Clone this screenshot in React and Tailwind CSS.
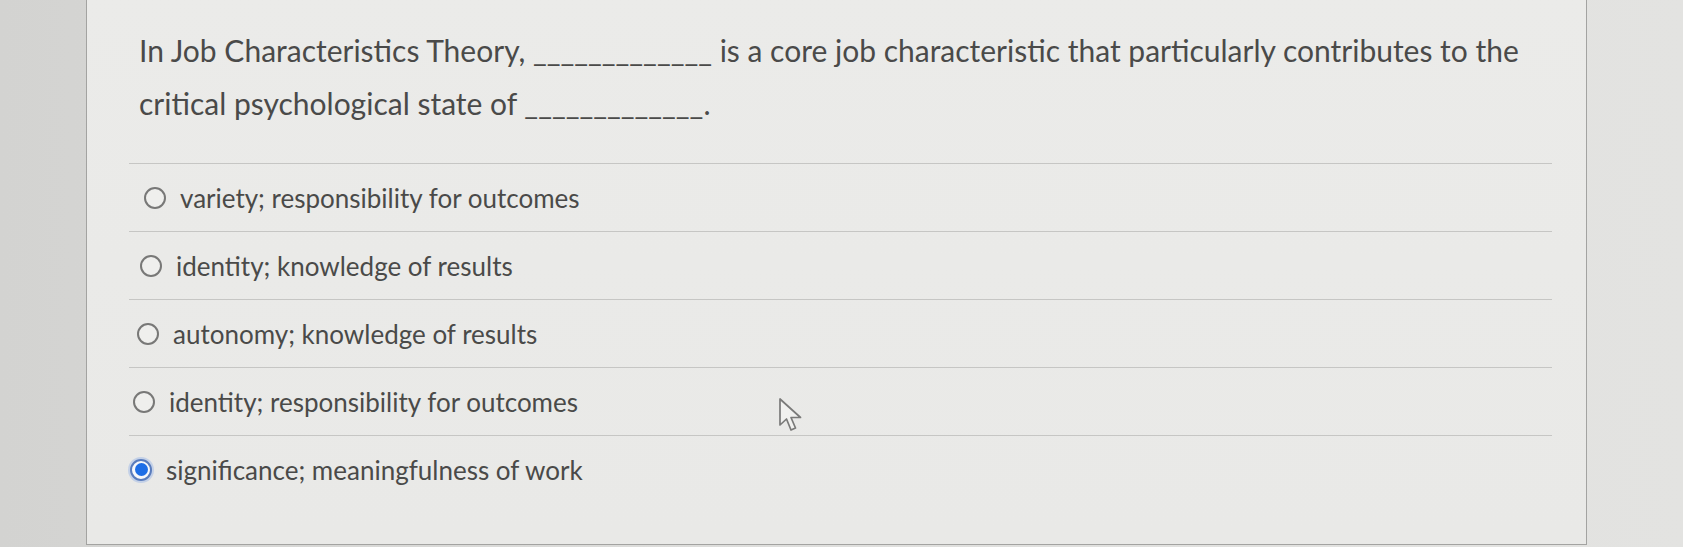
import React from "react";

const options = [
  { label: "variety; responsibility for outcomes", pad: "pl-[15px]", selected: false },
  { label: "identity; knowledge of results", pad: "pl-[11px]", selected: false },
  { label: "autonomy; knowledge of results", pad: "pl-[8px]", selected: false },
  { label: "identity; responsibility for outcomes", pad: "pl-[4px]", selected: false },
  { label: "significance; meaningfulness of work", pad: "pl-[1px]", selected: true },
];

function Radio({ selected }) {
  if (selected) {
    return (
      <span className="flex h-[22px] w-[22px] shrink-0 items-center justify-center rounded-full border-2 border-[#5a7cbc] bg-[#f7f8fb] shadow-[0_0_0_2px_rgba(150,180,230,0.45)]">
        <span className="h-[13px] w-[13px] rounded-full bg-[#1e6ee6]" />
      </span>
    );
  }
  return (
    <span className="h-[22px] w-[22px] shrink-0 rounded-full border-2 border-[#787877] bg-[#efefed]" />
  );
}

function Cursor() {
  return (
    <svg
      className="absolute left-[778px] top-[397px]"
      width="26"
      height="37"
      viewBox="0 0 26 37"
    >
      <path
        d="M2 2 L2 28 L8.5 22 L13 33 L17.5 31 L13 20.5 L22.5 20.5 Z"
        fill="#f1f1ef"
        stroke="#7a7a79"
        strokeWidth="1.7"
        strokeLinejoin="round"
      />
    </svg>
  );
}

export default function App() {
  return (
    <div
      className="relative h-[547px] w-[1683px] overflow-hidden bg-gradient-to-r from-[#d3d3d1] via-[#dfdfdd] to-[#e3e3e1]"
      style={{ fontFamily: "Lato, 'Open Sans', 'Noto Sans', sans-serif" }}
    >
      <div className="ml-[86px] h-[545px] w-[1501px] border-x border-b border-[#a3a3a1] bg-gradient-to-b from-[#ebebe9] to-[#e9e9e7]">
        <div className="pl-[52px] pt-[24px] text-[30px] leading-[53px] text-[#4a4a49]">
          <div className="whitespace-nowrap">
            In Job Characteristics Theory, _____________ is a core job characteristic that particularly contributes to the
          </div>
          <div className="whitespace-nowrap">critical psychological state of _____________.</div>
        </div>

        <div className="ml-[42px] mt-[33px] w-[1423px]">
          {options.map((o, i) => (
            <div
              key={i}
              className={`flex h-[68px] items-center gap-[14px] border-t border-[#c6c6c4] ${o.pad}`}
            >
              <Radio selected={o.selected} />
              <span className="whitespace-nowrap text-[26px] leading-none text-[#4a4a49]">
                {o.label}
              </span>
            </div>
          ))}
        </div>
      </div>
      <Cursor />
    </div>
  );
}
